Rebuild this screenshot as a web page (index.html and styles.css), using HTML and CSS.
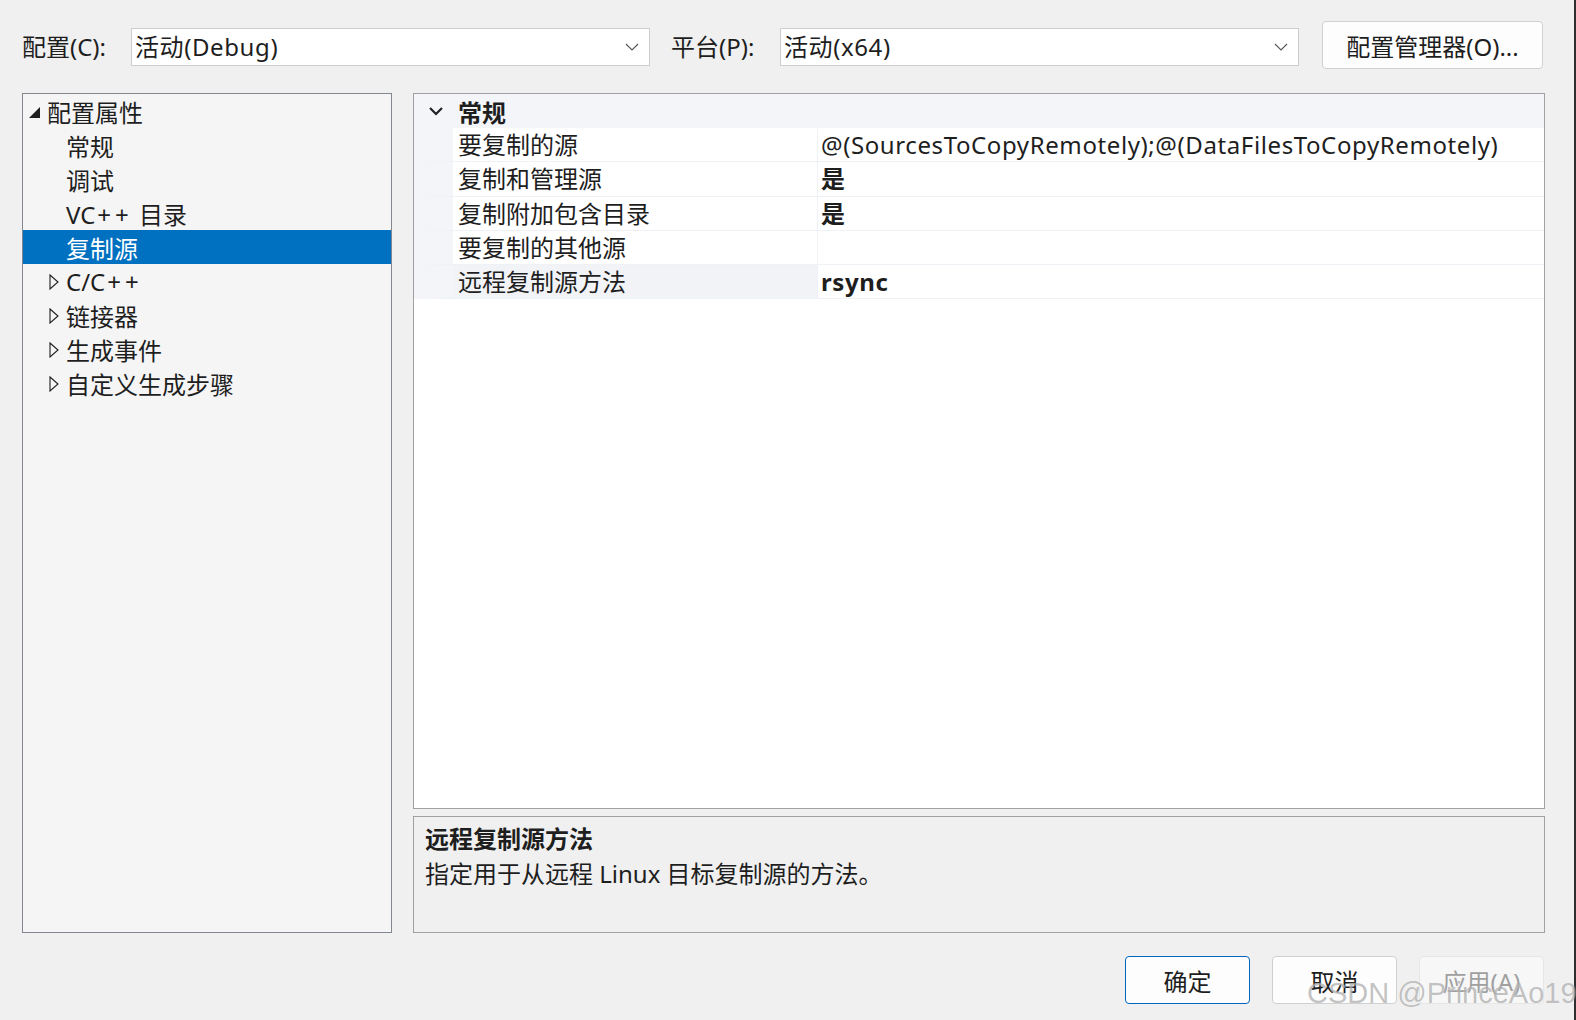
FILE: index.html
```html
<!DOCTYPE html>
<html lang="zh-CN">
<head>
    <meta charset="UTF-8">
    <title>属性页</title>
    <link rel="stylesheet" href="styles.css">
</head>
<body>
    <div class="dialog">
        <div class="toolbar">
            <span class="field-label">配置(C):</span>
            <div class="combo">
                <span>活动(Debug)</span>
                <svg class="combo-arrow" width="14" height="8" viewBox="0 0 14 8"><path d="M1 1l6 6 6-6" fill="none" stroke="#555" stroke-width="1.1"/></svg>
            </div>
            <span class="field-label platform">平台(P):</span>
            <div class="combo">
                <span>活动(x64)</span>
                <svg class="combo-arrow" width="14" height="8" viewBox="0 0 14 8"><path d="M1 1l6 6 6-6" fill="none" stroke="#555" stroke-width="1.1"/></svg>
            </div>
            <button class="btn btn-manager">配置管理器(O)...</button>
        </div>

        <div class="main">
            <div class="tree">
                <div class="tree-item root"><span class="twisty"><svg width="11" height="11" viewBox="0 0 11 11"><path d="M11 0v11H0z" fill="#1e1e1e"/></svg></span><span>配置属性</span></div>
                <div class="tree-item child"><span class="twisty"></span><span>常规</span></div>
                <div class="tree-item child"><span class="twisty"></span><span>调试</span></div>
                <div class="tree-item child"><span class="twisty"></span><span>VC<span class="plus">++</span> 目录</span></div>
                <div class="tree-item child selected"><span class="twisty"></span><span>复制源</span></div>
                <div class="tree-item child"><span class="twisty"><svg width="10" height="16" viewBox="0 0 10 16"><path d="M1 1l8 7-8 7z" fill="none" stroke="#1e1e1e" stroke-width="1.1"/></svg></span><span>C/C<span class="plus">++</span></span></div>
                <div class="tree-item child"><span class="twisty"><svg width="10" height="16" viewBox="0 0 10 16"><path d="M1 1l8 7-8 7z" fill="none" stroke="#1e1e1e" stroke-width="1.1"/></svg></span><span>链接器</span></div>
                <div class="tree-item child"><span class="twisty"><svg width="10" height="16" viewBox="0 0 10 16"><path d="M1 1l8 7-8 7z" fill="none" stroke="#1e1e1e" stroke-width="1.1"/></svg></span><span>生成事件</span></div>
                <div class="tree-item child"><span class="twisty"><svg width="10" height="16" viewBox="0 0 10 16"><path d="M1 1l8 7-8 7z" fill="none" stroke="#1e1e1e" stroke-width="1.1"/></svg></span><span>自定义生成步骤</span></div>
            </div>

            <div class="right">
                <div class="grid">
                    <div class="grid-cat">
                        <svg class="cat-arrow" width="16" height="10" viewBox="0 0 16 10"><path d="M2 2l6 6 6-6" fill="none" stroke="#222" stroke-width="2.2"/></svg>
                        <span>常规</span>
                    </div>
                    <div class="grid-row">
                        <div class="name">要复制的源</div>
                        <div class="value latin">@(SourcesToCopyRemotely);@(DataFilesToCopyRemotely)</div>
                    </div>
                    <div class="grid-row">
                        <div class="name">复制和管理源</div>
                        <div class="value bold">是</div>
                    </div>
                    <div class="grid-row">
                        <div class="name">复制附加包含目录</div>
                        <div class="value bold">是</div>
                    </div>
                    <div class="grid-row">
                        <div class="name">要复制的其他源</div>
                        <div class="value"></div>
                    </div>
                    <div class="grid-row current">
                        <div class="name">远程复制源方法</div>
                        <div class="value bold latin">rsync</div>
                    </div>
                </div>

                <div class="desc">
                    <div class="desc-title">远程复制源方法</div>
                    <div class="desc-text">指定用于从远程 Linux 目标复制源的方法。</div>
                </div>
            </div>
        </div>

        <div class="footer">
            <button class="btn btn-default">确定</button>
            <button class="btn">取消</button>
            <button class="btn" disabled>应用(A)</button>
        </div>

        <div class="watermark">CSDN @PrinceAo19</div>
    </div>
</body>
</html>
```

FILE: styles.css
```css
body {
    margin: 0;
    padding: 0;
    background-color: #f0f0f0;
    font-family: "Noto Sans", "Noto Sans CJK SC", sans-serif;
    font-size: 24px;
    color: #1e1e1e;
}

.dialog {
    position: relative;
    box-sizing: border-box;
    width: 1576px;
    height: 1020px;
    padding: 21px 29px 0 22px;
    border-right: 2px solid #2e2e2e;
}

.latin {
    letter-spacing: 0.6px;
}

/* barra superior */
.toolbar {
    display: flex;
    align-items: flex-start;
    height: 48px;
}

.field-label {
    width: 109px;
    margin-top: 10px;
    line-height: 32px;
    white-space: nowrap;
}

.field-label.platform {
    margin-left: 21px;
}

.combo {
    box-sizing: border-box;
    width: 519px;
    height: 38px;
    margin-top: 7px;
    display: flex;
    align-items: center;
    justify-content: space-between;
    padding: 0 10px 0 3px;
    background-color: #fff;
    border: 1px solid #cdcdcd;
}

.combo span {
    line-height: 36px;
    letter-spacing: 0.6px;
}

.btn {
    box-sizing: border-box;
    height: 48px;
    padding: 0;
    font-family: inherit;
    font-size: 24px;
    color: #1e1e1e;
    background-color: #fdfdfd;
    border: 1px solid #d0d0d0;
    border-radius: 4px;
}

.btn-manager {
    width: 221px;
    margin-left: 23px;
}

.btn:disabled {
    color: #a0a0a0;
    background-color: #f7f7f7;
    border-color: #e6e6e6;
}

.btn-default {
    border-color: #0067c0;
}

/* area principal */
.main {
    display: flex;
    margin-top: 24px;
}

.tree {
    box-sizing: border-box;
    width: 370px;
    height: 840px;
    padding-top: 0;
    background-color: #f5f5f5;
    border: 1px solid #828790;
}

.tree-item {
    display: flex;
    align-items: center;
    height: 34.1px;
    white-space: nowrap;
}

.tree-item.root {
    padding-left: 6px;
}

.tree-item.root .twisty {
    width: 18px;
    margin-top: 2px;
}

.tree-item.child {
    padding-left: 24px;
}

.twisty {
    display: flex;
    align-items: center;
    width: 19px;
    height: 100%;
}

.tree-item.child .twisty svg {
    margin-left: 2px;
}

.plus {
    margin-left: 2px;
    letter-spacing: 4px;
}

.tree-item.selected {
    background-color: #0070c0;
    color: #fff;
}

.right {
    margin-left: 21px;
    width: 1132px;
}

.grid {
    box-sizing: border-box;
    height: 716px;
    background-color: #fff;
    border: 1px solid #a0a0a0;
}

.grid-cat {
    display: flex;
    align-items: center;
    height: 34.2px;
    background-color: #f3f5f9;
    font-weight: bold;
}

.cat-arrow {
    margin: 0 14px 0 14px;
}

.grid-row {
    display: flex;
    height: 34.2px;
    box-sizing: border-box;
    border-bottom: 1px solid #eef1f5;
    border-left: 39px solid #f3f5f9;
}

.grid-row .name {
    width: 359px;
    padding-left: 5px;
    line-height: 34px;
    border-right: 1px solid #eef1f5;
}

.grid-row .value {
    flex: 1;
    padding-left: 3px;
    line-height: 34px;
    white-space: nowrap;
}

.grid-row.current .name {
    background-color: #f1f3f6;
}

.bold {
    font-weight: bold;
}

.desc {
    box-sizing: border-box;
    height: 117px;
    margin-top: 7px;
    padding: 4px 11px;
    background-color: #f0f0f0;
    border: 1px solid #a0a0a0;
}

.desc-title {
    font-weight: bold;
    line-height: 35px;
}

.desc-text {
    line-height: 35px;
}

/* botoes */
.footer {
    display: flex;
    justify-content: flex-end;
    gap: 22px;
    margin-top: 23px;
    padding-right: 1px;
}

.footer .btn {
    width: 125px;
}

.watermark {
    position: absolute;
    left: 1307px;
    top: 977px;
    font-family: "Liberation Sans", Arial, sans-serif;
    font-size: 29px;
    color: rgba(120, 120, 120, 0.45);
    text-shadow: 0 0 1px rgba(255, 255, 255, 0.6);
    white-space: nowrap;
}
```
